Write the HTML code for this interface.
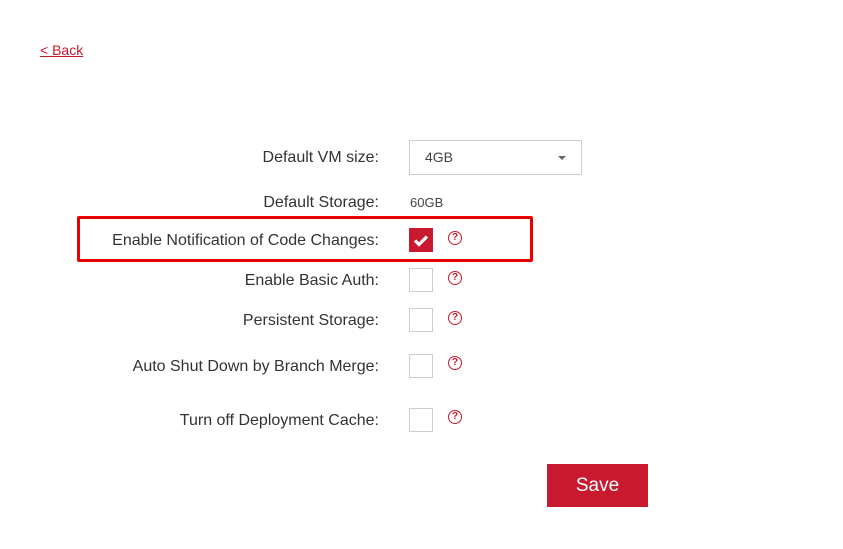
<!DOCTYPE html>
<html><head><style>
body{margin:0;width:843px;height:549px;background:#fff;font-family:"Liberation Sans",sans-serif;position:relative;overflow:hidden}
.a{position:absolute}
.lbl{position:absolute;right:464px;font-size:16px;color:#333;white-space:nowrap;line-height:18px}
.cb{position:absolute;left:409px;width:22px;height:22px;border:1px solid #ccc;background:#fff}
.q{position:absolute;left:448px;width:12px;height:12px;border:1.3px solid #c8192e;border-radius:50%;color:#c8192e;font-size:10px;line-height:12px;text-align:center;font-weight:bold}
</style></head><body>
<div class="a" style="left:40px;top:42px;font-size:14px;color:#c8192e;text-decoration:underline">&lt;&nbsp;Back</div>
<div class="lbl" style="top:149px">Default VM size:</div>
<div class="a" style="left:409px;top:140px;width:171px;height:33px;border:1px solid #ccc"></div>
<div class="a" style="left:425px;top:149px;font-size:14px;color:#444">4GB</div>
<div class="a" style="left:558px;top:156px;width:0;height:0;border-left:4px solid transparent;border-right:4px solid transparent;border-top:4px solid #666"></div>
<div class="lbl" style="top:194px">Default Storage:</div>
<div class="a" style="left:410px;top:195px;font-size:13px;color:#444">60GB</div>
<div class="a" style="left:77px;top:216px;width:450px;height:40px;border:3px solid #e80000;border-radius:2px"></div>
<div class="lbl" style="top:232px">Enable Notification of Code Changes:</div>
<div class="cb" style="top:228px;background:#c8192e;border-color:#c8192e">
<svg width="22" height="22" viewBox="0 0 22 22"><path d="M5 11.5l4 4 8-8" stroke="#fff" stroke-width="3.2" fill="none"/></svg></div>
<div class="q" style="top:231px">?</div>
<div class="lbl" style="top:272px">Enable Basic Auth:</div>
<div class="cb" style="top:268px"></div><div class="q" style="top:271px">?</div>
<div class="lbl" style="top:312px">Persistent Storage:</div>
<div class="cb" style="top:308px"></div><div class="q" style="top:311px">?</div>
<div class="lbl" style="top:358px">Auto Shut Down by Branch Merge:</div>
<div class="cb" style="top:354px"></div><div class="q" style="top:356px">?</div>
<div class="lbl" style="top:412px">Turn off Deployment Cache:</div>
<div class="cb" style="top:408px"></div><div class="q" style="top:410px">?</div>
<div class="a" style="left:547px;top:464px;width:101px;height:43px;background:#c8192e;color:#fff;font-size:19px;line-height:43px;text-align:center">Save</div>
</body></html>
